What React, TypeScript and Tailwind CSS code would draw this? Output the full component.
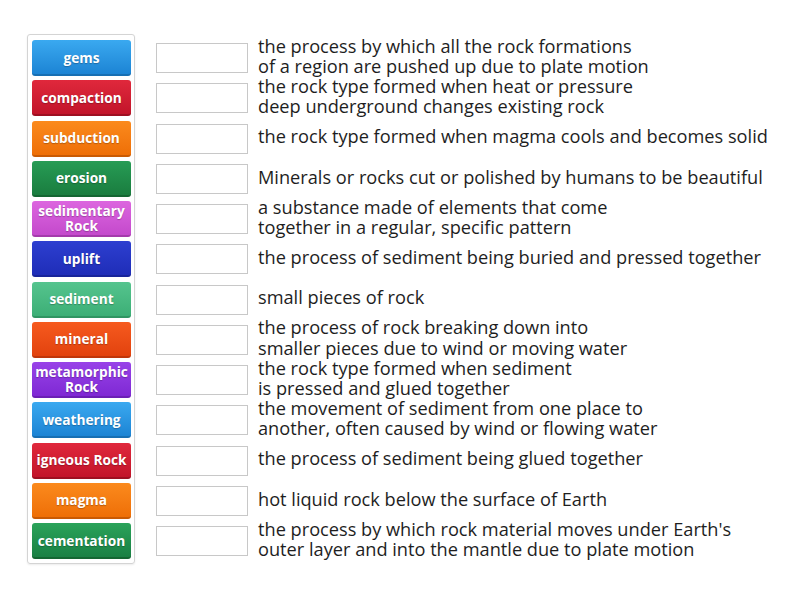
import React from 'react';

type Term = { label: string; cls: string };

const terms: Term[] = [
  { label: 'gems', cls: 'from-[#3aa9f0] to-[#1c84d4] border-[#176fb3]' },
  { label: 'compaction', cls: 'from-[#e0283c] to-[#c2142a] border-[#9e0f21]' },
  { label: 'subduction', cls: 'from-[#fb8a1c] to-[#ee6f06] border-[#c95a03]' },
  { label: 'erosion', cls: 'from-[#279c55] to-[#1a7d3f] border-[#146632]' },
  { label: 'sedimentary Rock', cls: 'from-[#dc66df] to-[#c449cc] border-[#a43aab]' },
  { label: 'uplift', cls: 'from-[#2d3fd0] to-[#1f2db8] border-[#18249a]' },
  { label: 'sediment', cls: 'from-[#55c48e] to-[#3caf76] border-[#2f9562]' },
  { label: 'mineral', cls: 'from-[#f65a1e] to-[#e2420d] border-[#bf360a]' },
  { label: 'metamorphic Rock', cls: 'from-[#9842e8] to-[#7f28d4] border-[#6a1fb5]' },
  { label: 'weathering', cls: 'from-[#3aa9f0] to-[#1c84d4] border-[#176fb3]' },
  { label: 'igneous Rock', cls: 'from-[#e0283c] to-[#c2142a] border-[#9e0f21]' },
  { label: 'magma', cls: 'from-[#fb8a1c] to-[#ee6f06] border-[#c95a03]' },
  { label: 'cementation', cls: 'from-[#2aa35a] to-[#1a8044] border-[#146632]' },
];

const defs: string[][] = [
  ['the process by which all the rock formations', 'of a region are pushed up due to plate motion'],
  ['the rock type formed when heat or pressure', 'deep underground changes existing rock'],
  ['the rock type formed when magma cools and becomes solid'],
  ['Minerals or rocks cut or polished by humans to be beautiful'],
  ['a substance made of elements that come', 'together in a regular, specific pattern'],
  ['the process of sediment being buried and pressed together'],
  ['small pieces of rock'],
  ['the process of rock breaking down into', 'smaller pieces due to wind or moving water'],
  ['the rock type formed when sediment', 'is pressed and glued together'],
  ['the movement of sediment from one place to', 'another, often caused by wind or flowing water'],
  ['the process of sediment being glued together'],
  ['hot liquid rock below the surface of Earth'],
  ["the process by which rock material moves under Earth's", 'outer layer and into the mantle due to plate motion'],
];

export default function App() {
  return (
    <div className="w-[800px] h-[600px] bg-white font-['Open_Sans',sans-serif] pt-[34px] pl-[27px] flex items-start">
      {/* term column */}
      <div className="w-[108px] border border-[#d4d4d4] rounded-[3px] pt-[5px] pl-[4px] pr-[3px] pb-[4px] flex flex-col gap-[4.25px] shadow-[0_1px_2px_rgba(0,0,0,0.08)]">
        {terms.map((t) => (
          <div
            key={t.label}
            className={`h-[36px] w-[99px] rounded-[3px] bg-gradient-to-b border-b-2 flex items-center justify-center text-center text-white font-bold text-[13.7px] leading-[15px] [text-shadow:0_1px_1px_rgba(0,0,0,0.25)] ${t.cls}`}
          >
            {t.label}
          </div>
        ))}
      </div>

      {/* answer rows */}
      <div className="ml-[21px] pt-[6px] flex flex-col gap-[4.25px]">
        {defs.map((d, i) => (
          <div key={i} className="h-[36px] flex items-center">
            <div className="w-[92px] h-[30px] border border-[#c8c8c8] bg-white shrink-0" />
            <div className="ml-[10px] pb-[4px] text-[18.2px] leading-[20.5px] text-[#1e1e1e] whitespace-nowrap">
              {d.map((l, j) => (
                <div key={j}>{l}</div>
              ))}
            </div>
          </div>
        ))}
      </div>
    </div>
  );
}
